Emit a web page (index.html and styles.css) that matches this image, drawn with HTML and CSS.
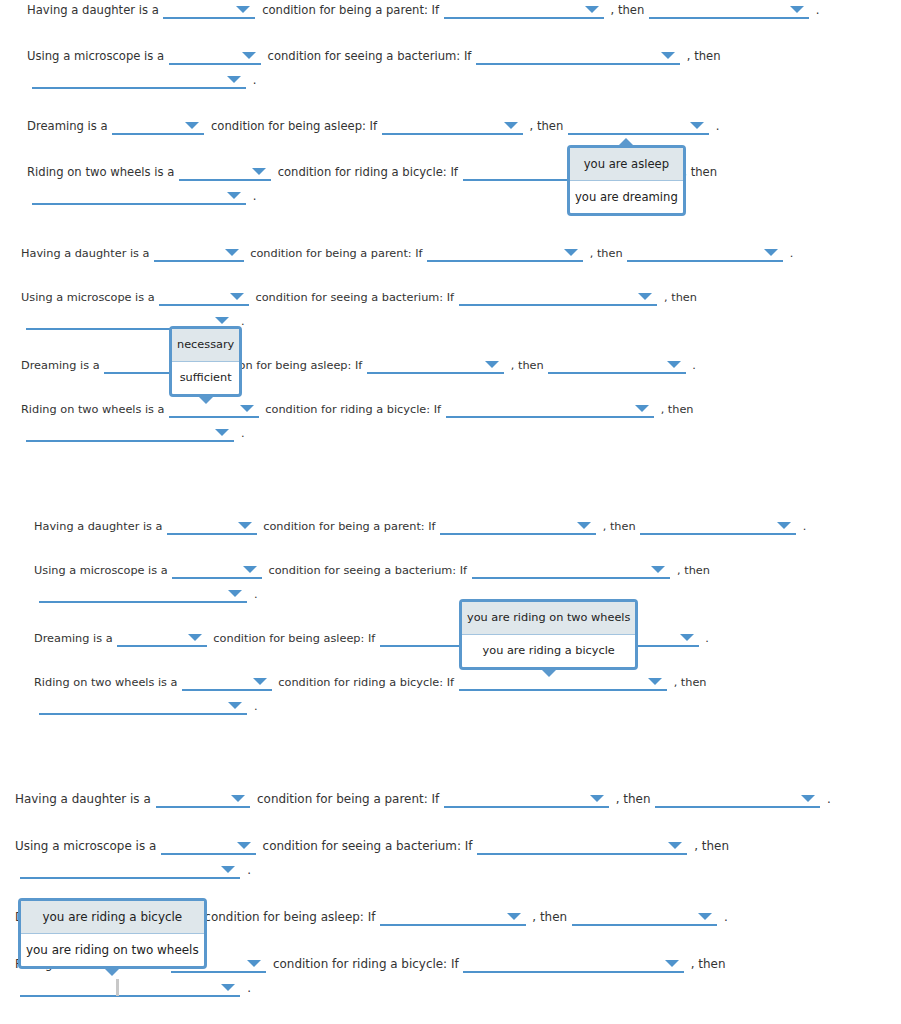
FILE: index.html
```html
<!DOCTYPE html>
<html lang="en">
<head>
<meta charset="utf-8">
<title>Conditions</title>
<link rel="stylesheet" href="styles.css">
</head>
<body>
<div class="sheet">

  <section class="block b1">
    <p class="q">Having a daughter is a <span class="dd w92"></span> condition for being a parent: If <span class="dd w160"></span> , then <span class="dd w160"></span> .</p>
    <p class="q">Using a microscope is a <span class="dd w92"></span> condition for seeing a bacterium: If <span class="dd w204"></span> , then <span class="dd w214"></span> .</p>
    <p class="q">Dreaming is a <span class="dd w92"></span> condition for being asleep: If <span class="dd w141"></span> , then <span class="dd w141"></span> .</p>
    <p class="q">Riding on two wheels is a <span class="dd w92"></span> condition for riding a bicycle: If <span class="dd w214"></span> , then <span class="dd w214"></span> .</p>
    <div class="pop pop-up p1">
      <div class="opt hl">you are asleep</div>
      <div class="opt">you are dreaming</div>
    </div>
  </section>

  <section class="block b2">
    <p class="q">Having a daughter is a <span class="dd w92"></span> condition for being a parent: If <span class="dd w160"></span> , then <span class="dd w160"></span> .</p>
    <p class="q">Using a microscope is a <span class="dd w92"></span> condition for seeing a bacterium: If <span class="dd w204"></span> , then <span class="dd w214"></span> .</p>
    <p class="q">Dreaming is a <span class="dd w92"></span> condition for being asleep: If <span class="dd w141"></span> , then <span class="dd w141"></span> .</p>
    <p class="q">Riding on two wheels is a <span class="dd w92"></span> condition for riding a bicycle: If <span class="dd w214"></span> , then <span class="dd w214"></span> .</p>
    <div class="pop pop-down p2">
      <div class="opt hl">necessary</div>
      <div class="opt">sufficient</div>
    </div>
  </section>

  <section class="block b3">
    <p class="q">Having a daughter is a <span class="dd w92"></span> condition for being a parent: If <span class="dd w160"></span> , then <span class="dd w160"></span> .</p>
    <p class="q">Using a microscope is a <span class="dd w92"></span> condition for seeing a bacterium: If <span class="dd w204"></span> , then <span class="dd w214"></span> .</p>
    <p class="q">Dreaming is a <span class="dd w92"></span> condition for being asleep: If <span class="dd w141"></span> , then <span class="dd w141"></span> .</p>
    <p class="q">Riding on two wheels is a <span class="dd w92"></span> condition for riding a bicycle: If <span class="dd w214"></span> , then <span class="dd w214"></span> .</p>
    <div class="pop pop-down p3">
      <div class="opt hl">you are riding on two wheels</div>
      <div class="opt">you are riding a bicycle</div>
    </div>
  </section>

  <section class="block b4">
    <p class="q">Having a daughter is a <span class="dd w92"></span> condition for being a parent: If <span class="dd w160"></span> , then <span class="dd w160"></span> .</p>
    <p class="q">Using a microscope is a <span class="dd w92"></span> condition for seeing a bacterium: If <span class="dd w204"></span> , then <span class="dd w214"></span> .</p>
    <p class="q">Dreaming is a <span class="dd w92"></span> condition for being asleep: If <span class="dd w141"></span> , then <span class="dd w141"></span> .</p>
    <p class="q">Riding on two wheels is a <span class="dd w92"></span> condition for riding a bicycle: If <span class="dd w214"></span> , then <span class="dd w214"></span> .</p>
    <div class="pop pop-down p4">
      <div class="opt hl">you are riding a bicycle</div>
      <div class="opt">you are riding on two wheels</div>
    </div>
    <div class="caret"></div>
  </section>

</div>
</body>
</html>
```

FILE: styles.css
```css
html, body {
  margin: 0;
  padding: 0;
  background: #ffffff;
}

body {
  font-family: "DejaVu Sans", Verdana, sans-serif;
  font-size: 11.6px;
  color: #333333;
}

.sheet {
  display: flex;
  flex-direction: column;
  width: 890px;
}

.block {
  position: relative;
  display: flex;
  flex-direction: column;
  gap: 22px;
}

.b1 { margin-top: -2px; padding-left: 27px; gap: 22px; font-size: 11.6px; }
.b2 { margin-top: 34px; padding-left: 21px; gap: 20px; font-size: 11.3px; }
.b3 { margin-top: 69px; padding-left: 34px; gap: 20px; font-size: 11.3px; }
.b4 { margin-top: 68px; padding-left: 15px; gap: 23px; font-size: 11.95px; }

.q {
  margin: 0;
  line-height: 24px;
  padding-left: 4px;
  text-indent: -4px;
}

.dd {
  position: relative;
  display: inline-block;
  height: 16px;
  border-bottom: 2px solid #4f93cc;
  vertical-align: -5px;
  margin: 0 3px 0 1px;
  text-indent: 0;
}

.dd::after {
  content: "";
  position: absolute;
  right: 5px;
  bottom: 4px;
  border-left: 7px solid transparent;
  border-right: 7px solid transparent;
  border-top: 7px solid #4f93cc;
}

.w92 { width: 7.93em; }
.w141 { width: 12.16em; }
.w160 { width: 13.8em; }
.w204 { width: 17.59em; }
.w214 { width: 18.45em; }

.pop {
  position: absolute;
  z-index: 2;
  display: flex;
  flex-direction: column;
  border: 3px solid #5a98cd;
  border-radius: 4px;
  background: #ffffff;
}

.opt {
  height: 32px;
  line-height: 32px;
  padding: 0 5px;
  text-align: center;
  white-space: nowrap;
  color: #222222;
}

.opt.hl {
  background: #dfe7eb;
  border-bottom: 1px solid #a3c4df;
}

.pop::after {
  content: "";
  position: absolute;
  left: 50%;
  margin-left: -7px;
  border-left: 7px solid transparent;
  border-right: 7px solid transparent;
}

.pop-up::after {
  top: -10px;
  border-bottom: 7px solid #5a98cd;
}

.pop-down::after {
  bottom: -10px;
  border-top: 7px solid #5a98cd;
}

.p1 { left: 567px; top: 147px; }
.p2 { left: 169px; top: 84px; }
.p3 { left: 459px; top: 84px; }
.p4 { left: 18px; top: 111px; }

.caret {
  position: absolute;
  left: 116px;
  top: 192px;
  width: 3px;
  height: 17px;
  background: #c8c8c8;
}
```
